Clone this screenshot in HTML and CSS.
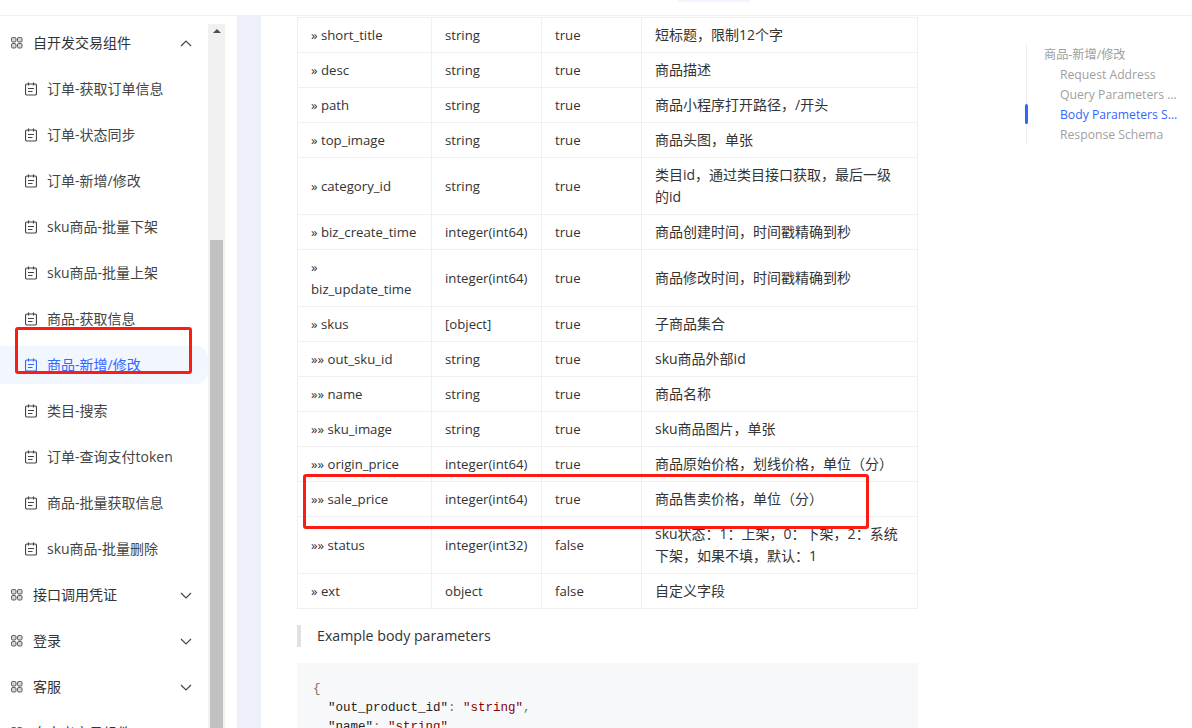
FILE: index.html
```html
<!DOCTYPE html>
<html lang="zh">
<head>
<meta charset="utf-8">
<title>商品-新增/修改</title>
<link rel="stylesheet" href="styles.css">
</head>
<body>
<svg class="defs" width="0" height="0" aria-hidden="true">
  <symbol id="grid" viewBox="0 0 12 12">
    <g fill="#d8d8d8" stroke="#555" stroke-width="1"><rect x=".5" y=".5" width="4.500" height="4.500" rx="1.300"/><rect x="6.500" y=".5" width="4.500" height="4.500" rx="1.300"/><rect x=".5" y="6.500" width="4.500" height="4.500" rx="1.300"/><rect x="6.500" y="6.500" width="4.500" height="4.500" rx="1.300"/></g>
  </symbol>
  <symbol id="doc" viewBox="0 0 12 14">
    <path d="M2 2h8a1.500 1.500 0 0 1 1.500 1.500v8A1.500 1.500 0 0 1 10 13H2A1.500 1.500 0 0 1 .5 11.500v-8A1.500 1.500 0 0 1 2 2zM3.500 .5v3M8.500 .5v3M3 6.500h6M3 9.500h4.500" fill="none" stroke="currentColor" stroke-width="1.200"/>
  </symbol>
  <symbol id="up" viewBox="0 0 12 7"><path d="M1 6l5-5 5 5" fill="none" stroke="#444" stroke-width="1.200"/></symbol>
  <symbol id="down" viewBox="0 0 12 7"><path d="M1 1l5 5 5-5" fill="none" stroke="#444" stroke-width="1.200"/></symbol>
</svg>
<header class="topbar"><div class="pill"></div></header>
<div class="main">
  <nav class="sidebar">
    <div class="group"><svg class="gicon"><use href="#grid"/></svg><span class="glabel">自开发交易组件</span><svg class="chev"><use href="#up"/></svg></div>
    <div class="item"><svg class="dicon"><use href="#doc"/></svg><span>订单-获取订单信息</span></div>
    <div class="item"><svg class="dicon"><use href="#doc"/></svg><span>订单-状态同步</span></div>
    <div class="item"><svg class="dicon"><use href="#doc"/></svg><span>订单-新增/修改</span></div>
    <div class="item"><svg class="dicon"><use href="#doc"/></svg><span>sku商品-批量下架</span></div>
    <div class="item"><svg class="dicon"><use href="#doc"/></svg><span>sku商品-批量上架</span></div>
    <div class="item"><svg class="dicon"><use href="#doc"/></svg><span>商品-获取信息</span></div>
    <div class="item active"><svg class="dicon"><use href="#doc"/></svg><span>商品-新增/修改</span></div>
    <div class="item"><svg class="dicon"><use href="#doc"/></svg><span>类目-搜索</span></div>
    <div class="item"><svg class="dicon"><use href="#doc"/></svg><span>订单-查询支付token</span></div>
    <div class="item"><svg class="dicon"><use href="#doc"/></svg><span>商品-批量获取信息</span></div>
    <div class="item"><svg class="dicon"><use href="#doc"/></svg><span>sku商品-批量删除</span></div>
    <div class="group"><svg class="gicon"><use href="#grid"/></svg><span class="glabel">接口调用凭证</span><svg class="chev"><use href="#down"/></svg></div>
    <div class="group"><svg class="gicon"><use href="#grid"/></svg><span class="glabel">登录</span><svg class="chev"><use href="#down"/></svg></div>
    <div class="group"><svg class="gicon"><use href="#grid"/></svg><span class="glabel">客服</span><svg class="chev"><use href="#down"/></svg></div>
    <div class="group"><svg class="gicon"><use href="#grid"/></svg><span class="glabel">自定义交易组件</span><svg class="chev"><use href="#down"/></svg></div>
  </nav>
  <div class="scrollbar"><div class="sb-up"></div><div class="sb-thumb"></div></div>
  <div class="band"></div>
  <main class="content">
    <table class="params">
      <colgroup><col class="c1"><col class="c2"><col class="c3"><col class="c4"></colgroup>
      <tr><td>» short_title</td><td>string</td><td>true</td><td>短标题，限制12个字</td></tr>
      <tr><td>» desc</td><td>string</td><td>true</td><td>商品描述</td></tr>
      <tr><td>» path</td><td>string</td><td>true</td><td>商品小程序打开路径，/开头</td></tr>
      <tr><td>» top_image</td><td>string</td><td>true</td><td>商品头图，单张</td></tr>
      <tr><td>» category_id</td><td>string</td><td>true</td><td>类目id，通过类目接口获取，最后一级的id</td></tr>
      <tr><td>» biz_create_time</td><td>integer(int64)</td><td>true</td><td>商品创建时间，时间戳精确到秒</td></tr>
      <tr><td>»<br>biz_update_time</td><td>integer(int64)</td><td>true</td><td>商品修改时间，时间戳精确到秒</td></tr>
      <tr><td>» skus</td><td>[object]</td><td>true</td><td>子商品集合</td></tr>
      <tr><td>»» out_sku_id</td><td>string</td><td>true</td><td>sku商品外部id</td></tr>
      <tr><td>»» name</td><td>string</td><td>true</td><td>商品名称</td></tr>
      <tr><td>»» sku_image</td><td>string</td><td>true</td><td>sku商品图片，单张</td></tr>
      <tr><td>»» origin_price</td><td>integer(int64)</td><td>true</td><td>商品原始价格，划线价格，单位（分）</td></tr>
      <tr><td>»» sale_price</td><td>integer(int64)</td><td>true</td><td>商品售卖价格，单位（分）</td></tr>
      <tr><td>»» status</td><td>integer(int32)</td><td>false</td><td>sku状态：1：上架，0：下架，2：系统下架，如果不填，默认：1</td></tr>
      <tr><td>» ext</td><td>object</td><td>false</td><td>自定义字段</td></tr>
    </table>
    <blockquote class="quote">Example body parameters</blockquote>
    <pre class="code"><span class="brace">{</span>
  <span class="key">"out_product_id"</span><span class="punct">:</span> <span class="str">"string"</span><span class="punct">,</span>
  <span class="key">"name"</span><span class="punct">:</span> <span class="str">"string"</span><span class="punct">,</span></pre>
  </main>
  <aside class="toc">
    <div class="toc-title">商品-新增/修改</div>
    <div class="toc-sub">Request Address</div>
    <div class="toc-sub">Query Parameters Schema</div>
    <div class="toc-sub on">Body Parameters Schema</div>
    <div class="toc-sub">Response Schema</div>
  </aside>
</div>
<div class="mark mark-a"></div>
<div class="mark mark-b"></div>
</body>
</html>
```
FILE: styles.css
```css
* { box-sizing: border-box; }
html, body { margin: 0; height: 100%; overflow: hidden; background: #fff; }
body { font-family: "Open Sans", "Noto Sans CJK SC", sans-serif; color: #333; font-size: 13px; }
.defs { position: absolute; }
.topbar { height: 16px; border-bottom: 1px solid #f2f2f2; }
.pill { width: 73px; height: 2px; margin-left: 677px; background: #f0f5ff; border-radius: 0 0 4px 4px; }
.main { display: flex; height: 712px; overflow: hidden; }
.sidebar { width: 208px; flex: none; padding-top: 4px; }
.group, .item { display: flex; align-items: center; height: 46px; font-size: 14px; white-space: nowrap; }
.group span, .item span { margin-top: -3px; }
.group { padding-left: 11px; }
.item { padding-left: 25px; color: #444; }
.gicon { width: 12px; height: 12px; flex: none; margin-right: 10px; }
.glabel { flex: 1; }
.chev { width: 12px; height: 7px; flex: none; margin-right: 16px; }
.dicon { width: 12px; height: 14px; flex: none; margin-right: 10px; }
.item.active { height: 38px; margin: 4px 0; background: #f1f6ff; border-radius: 0 12px 12px 0; color: #3366ff; }
.scrollbar { width: 17px; flex: none; margin-top: 8px; background: #f1f1f1; display: flex; flex-direction: column; }
.sb-up { height: 17px; }
.sb-up::before { content: ""; display: block; width: 0; margin: 5px auto 0; border: 4px solid transparent; border-top: 0; border-bottom: 4px solid #505050; }
.sb-thumb { margin: 199px 2px 0; flex: 1; background: #c1c1c1; }
.band { width: 24px; flex: none; margin-left: 12px; background: #edf0f9; }
.content { width: 765px; flex: none; padding: 1px 0 0 36px; }
.params { width: 620px; table-layout: fixed; border-collapse: collapse; font-size: 13.2px; color: #333; }
.c1 { width: 134px; } .c2 { width: 110px; } .c3 { width: 100px; } .c4 { width: 276px; }
.params td { border: 1px solid #f0f0f0; padding: 6px 13px; line-height: 22px; vertical-align: middle; }
.params td:nth-child(4) { font-size: 14px; }
.quote { margin: 16px 0; padding: 0 16px; border-left: 4px solid #dfe2e5; font-size: 14.2px; line-height: 22px; color: #333; }
.code { width: 621px; margin: 0; background: #f6f8fa; padding: 17px 16px 16px; font: 12.5px/19px "Liberation Mono", monospace; height: 100px; color: #333; }
.brace { color: #8a6d5d; }
.punct { color: #777; }
.key { color: #222; }
.str { color: #800; }
.toc { width: 166px; flex: none; margin: 28px 0 0 0; height: 100px; border-left: 1px solid #eee; font-size: 12.2px; color: #a0a0a0; }
.toc-title { height: 20px; line-height: 22px; padding-left: 17px; white-space: nowrap; }
.toc-sub { height: 20px; line-height: 22px; margin-left: 33px; width: 119px; white-space: nowrap; overflow: hidden; text-overflow: ellipsis; }
.toc-sub.on { color: #3366ff; }
.toc::after { content: ""; position: absolute; left: 1025px; top: 104px; width: 3px; height: 20px; background: #3366ff; border-radius: 2px; }
.mark { position: absolute; border: 3px solid #fb1c14; border-radius: 3px; }
.mark-a { left: 15px; top: 327px; width: 177px; height: 47px; }
.mark-b { left: 303px; top: 474px; width: 566px; height: 55px; }
```
